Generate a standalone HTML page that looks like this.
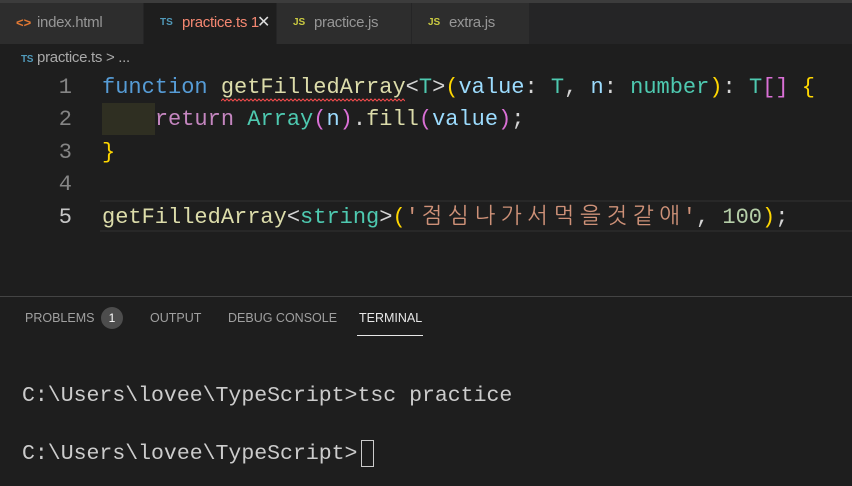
<!DOCTYPE html>
<html><head><meta charset="utf-8"><style>
*{margin:0;padding:0;box-sizing:border-box}
body{width:852px;height:486px;background:#1e1e1e;overflow:hidden;position:relative;font-family:"Liberation Sans",sans-serif}
.top{position:absolute;left:0;top:0;width:852px;height:3px;background:#3c3c3c}
.tabs{position:absolute;left:0;top:3px;width:852px;height:41px;background:#252526}
.tab{position:absolute;top:0;height:41px;background:#2d2d2d;color:#969696;font-size:15px;letter-spacing:-0.3px;line-height:40px;border-right:1px solid #252526}
.tab .ic{position:absolute;font-size:10px;font-weight:bold;letter-spacing:0}
.mono{font-family:"Liberation Mono","NanumGothic",monospace}
.code{position:absolute;left:0;top:72px;font-size:22px;line-height:32.4px;white-space:pre;color:#d4d4d4}
.ln{position:absolute;left:0;width:72px;text-align:right;color:#858585}
.k{display:inline-block;width:26.4px;text-align:center}
.panel{position:absolute;left:0;top:296px;width:852px;border-top:1px solid #444}
.pt{position:absolute;top:311px;font-size:12.5px;color:#a0a0a0}
.term{position:absolute;left:22px;font-size:21.5px;color:#cccccc;white-space:pre}
</style></head><body>
<div class="top"></div>
<div class="tabs">
 <div class="tab" style="left:0;width:144px"><span class="ic" style="left:16px;color:#e37933;font-size:13px">&lt;&gt;</span><span style="position:absolute;left:37px">index.html</span></div>
 <div class="tab" style="left:144px;width:133px;background:#1e1e1e;color:#f48771"><span class="ic" style="left:16px;color:#519aba">TS</span><span style="position:absolute;left:38px">practice.ts 1</span><span style="position:absolute;left:113px;color:#ddd;font-size:16px">✕</span></div>
 <div class="tab" style="left:277px;width:135px"><span class="ic" style="left:16px;color:#cbcb41">JS</span><span style="position:absolute;left:37px">practice.js</span></div>
 <div class="tab" style="left:412px;width:118px"><span class="ic" style="left:16px;color:#cbcb41">JS</span><span style="position:absolute;left:37px">extra.js</span></div>
</div>
<div style="position:absolute;left:21px;top:49px;font-size:15px;color:#a9a9a9;letter-spacing:-0.3px"><span style="color:#519aba;font-size:10px;font-weight:bold">TS</span> practice.ts &gt; ...</div>
<div style="position:absolute;left:102px;top:103px;width:53px;height:32px;background:#2f2f22"></div>
<div style="position:absolute;left:100px;top:200px;width:752px;height:32px;border-top:2px solid #282828;border-bottom:2px solid #282828"></div>
<svg style="position:absolute;left:221px;top:98px" width="184" height="4"><polyline fill="none" stroke="#f14c4c" stroke-width="1" points="0,3 2,1 4,3 6,1 8,3 10,1 12,3 14,1 16,3 18,1 20,3 22,1 24,3 26,1 28,3 30,1 32,3 34,1 36,3 38,1 40,3 42,1 44,3 46,1 48,3 50,1 52,3 54,1 56,3 58,1 60,3 62,1 64,3 66,1 68,3 70,1 72,3 74,1 76,3 78,1 80,3 82,1 84,3 86,1 88,3 90,1 92,3 94,1 96,3 98,1 100,3 102,1 104,3 106,1 108,3 110,1 112,3 114,1 116,3 118,1 120,3 122,1 124,3 126,1 128,3 130,1 132,3 134,1 136,3 138,1 140,3 142,1 144,3 146,1 148,3 150,1 152,3 154,1 156,3 158,1 160,3 162,1 164,3 166,1 168,3 170,1 172,3 174,1 176,3 178,1 180,3 182,1 184,3"/></svg>
<div class="code mono">
<div class="ln" style="top:0">1</div><div class="ln" style="top:32.4px">2</div><div class="ln" style="top:64.8px">3</div><div class="ln" style="top:97.2px">4</div><div class="ln" style="top:129.6px;color:#c6c6c6">5</div>
<div style="position:absolute;left:102px;top:0"><span style="color:#569cd6">function</span> <span style="color:#dcdcaa">getFilledArray</span><span style="color:#d4d4d4">&lt;</span><span style="color:#4ec9b0">T</span><span style="color:#d4d4d4">&gt;</span><span style="color:#ffd700">(</span><span style="color:#9cdcfe">value</span>: <span style="color:#4ec9b0">T</span>, <span style="color:#9cdcfe">n</span>: <span style="color:#4ec9b0">number</span><span style="color:#ffd700">)</span>: <span style="color:#4ec9b0">T</span><span style="color:#da70d6">[]</span> <span style="color:#ffd700">{</span></div>
<div style="position:absolute;left:102px;top:32.4px">    <span style="color:#c586c0">return</span> <span style="color:#4ec9b0">Array</span><span style="color:#da70d6">(</span><span style="color:#9cdcfe">n</span><span style="color:#da70d6">)</span>.<span style="color:#dcdcaa">fill</span><span style="color:#da70d6">(</span><span style="color:#9cdcfe">value</span><span style="color:#da70d6">)</span>;</div>
<div style="position:absolute;left:102px;top:64.8px;color:#ffd700">}</div>
<div style="position:absolute;left:102px;top:129.6px"><span style="color:#dcdcaa">getFilledArray</span><span style="color:#d4d4d4">&lt;</span><span style="color:#4ec9b0">string</span><span style="color:#d4d4d4">&gt;</span><span style="color:#ffd700">(</span><span style="color:#ce9178">'<span class="k">점</span><span class="k">심</span><span class="k">나</span><span class="k">가</span><span class="k">서</span><span class="k">먹</span><span class="k">을</span><span class="k">것</span><span class="k">같</span><span class="k">애</span>'</span>, <span style="color:#b5cea8">100</span><span style="color:#ffd700">)</span>;</div>
</div>
<div class="panel"></div>
<div class="pt" style="left:25px">PROBLEMS</div>
<div style="position:absolute;left:101px;top:307px;width:22px;height:22px;border-radius:11px;background:#4d4d4d;color:#fff;font-size:12px;text-align:center;line-height:22px">1</div>
<div class="pt" style="left:150px">OUTPUT</div>
<div class="pt" style="left:228px">DEBUG CONSOLE</div>
<div class="pt" style="left:359px;color:#e7e7e7">TERMINAL</div>
<div style="position:absolute;left:357px;top:335px;width:66px;height:1px;background:#e7e7e7"></div>
<div class="term mono" style="top:384px">C:\Users\lovee\TypeScript&gt;tsc practice</div>
<div class="term mono" style="top:442px">C:\Users\lovee\TypeScript&gt;</div>
<div style="position:absolute;left:361px;top:440px;width:13px;height:27px;border:1px solid #ccc"></div>
</body></html>
